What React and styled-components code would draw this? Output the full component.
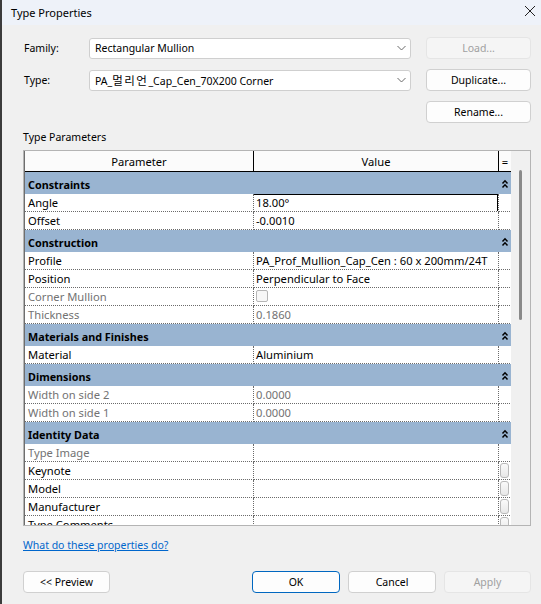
import React from "react";
import styled, { createGlobalStyle } from "styled-components";

const Global = createGlobalStyle`
  html, body { margin: 0; padding: 0; background: #f0f0f0; }
  * { box-sizing: border-box; }
  body { font-family: "Noto Sans", "Noto Sans CJK KR", sans-serif; font-size: 10.5px; color: #000; }
`;

const Window = styled.div`
  width: 541px;
  height: 604px;
  background: #f0f0f0;
  border-left: 2px solid #3c3c3c;
  display: flex;
  flex-direction: column;
  overflow: hidden;
`;

const TitleBar = styled.div`
  height: 25px;
  background: #eef2f9;
  display: flex;
  align-items: center;
  justify-content: space-between;
  padding: 0 4px 0 9px;
  font-size: 11px;
`;

const Close = styled.div`
  width: 14px;
  height: 14px;
  display: flex;
  align-items: center;
  justify-content: center;
  margin-top: -4px;
`;

const Body = styled.div`
  flex: 1;
  display: flex;
  flex-direction: column;
  padding: 12px 10px 0 21px;
`;

const TopGrid = styled.div`
  display: grid;
  grid-template-columns: 66px 322px 105px;
  grid-template-rows: 22px 22px 22px;
  row-gap: 10px;
  align-items: center;
  & > :nth-child(3n) { margin-left: 15px; width: 105px; }
`;

const Label = styled.div`
  padding-left: 1px;
`;

const Combo = styled.div`
  height: 21px;
  background: #fff;
  border: 1px solid #cfcfcf;
  border-radius: 3px;
  display: flex;
  align-items: center;
  justify-content: space-between;
  padding: 0 4px 0 5px;
`;

const Hangul = styled.span`
  font-family: "Noto Sans CJK KR", sans-serif;
  font-size: 11.5px;
  letter-spacing: 1.5px;
`;

const Btn = styled.button`
  height: 22px;
  width: ${(p) => p.$w || 88}px;
  font-family: inherit;
  font-size: 10.5px;
  padding: 0;
  border-radius: 4px;
  background: ${(p) => (p.disabled ? "#f5f5f5" : "#fdfdfd")};
  color: ${(p) => (p.disabled ? "#a0a0a0" : "#000")};
  border: 1px solid ${(p) => (p.$default ? "#0067c0" : p.disabled ? "#e5e5e5" : "#d0d0d0")};
`;

const SectionLabel = styled.div`
  margin-top: 6px;
  line-height: 16px;
`;

const Panel = styled.div`
  margin-top: 5px;
  height: 376px;
  width: 508px;
  border: 1px solid #b4b4b4;
  display: flex;
  background: #f0f0f0;
`;

const Grid = styled.div`
  width: 487px;
  height: 100%;
  overflow: hidden;
  border-left: 1px solid #6e6e6e;
  display: grid;
  grid-template-columns: 229px 245px 13px;
  grid-auto-rows: auto;
  align-content: start;
  font-size: 11.2px;
`;

const HeadCell = styled.div`
  height: 21px;
  background: #fbfbfb;
  border-right: 1px solid #000;
  border-bottom: 1px solid #000;
  display: flex;
  align-items: center;
  justify-content: center;
`;

const GroupRow = styled.div`
  grid-column: 1 / -1;
  height: 22px;
  background: #99b4d1;
  display: flex;
  align-items: center;
  justify-content: space-between;
  padding: 2px 3px 0 3px;
  font-weight: bold;
  font-size: 10.8px;
`;

const Cell = styled.div`
  height: 18px;
  border-right: 1px dotted #6a6a6a;
  border-bottom: 1px dotted #6a6a6a;
  background: #fff;
  display: flex;
  align-items: center;
  padding: 0 0 1px ${(p) => (p.$pad ?? 3)}px;
  color: ${(p) => (p.$disabled ? "#727272" : "#000")};
  white-space: nowrap;
  overflow: hidden;
  position: relative;
`;

const EditBox = styled.div`
  position: absolute;
  inset: 0 0 -1px -1px;
  border: 1.5px solid #000;
  display: flex;
  align-items: center;
  padding-left: 2px;
  padding-bottom: 1px;
  background: #fff;
`;

const Check = styled.div`
  width: 12px;
  height: 12px;
  border: 1px solid #b6b6b6;
  border-radius: 2px;
  background: #f7f7f7;
`;

const MiniBtn = styled.div`
  width: 9px;
  height: 15px;
  margin-left: 1px;
  border: 1px solid #b9b9b9;
  border-radius: 3px;
  background: linear-gradient(#fafafa, #e8e8e8);
`;

const ScrollArea = styled.div`
  flex: 1;
  display: flex;
  justify-content: center;
  padding: 19px 1px 0 0;
`;

const Thumb = styled.div`
  width: 3px;
  height: 150px;
  border-radius: 2px;
  background: #8a8a8a;
`;

const Link = styled.a`
  margin-top: 11px;
  line-height: 16px;
  color: #0066cc;
  text-decoration: underline;
  align-self: flex-start;
`;

const Footer = styled.div`
  margin-top: 18px;
  display: flex;
  gap: 8px;
  align-items: center;
  & > :first-child { margin-right: auto; }
`;

const Chevron = () => (
  <svg width="9" height="6" viewBox="0 0 9 6">
    <path d="M0.5 1 L4.5 5 L8.5 1" fill="none" stroke="#6a6a6a" strokeWidth="1" />
  </svg>
);

const Collapse = () => (
  <svg width="8" height="10" viewBox="0 0 8 10">
    <path d="M1.5 4.5 L4 1.8 L6.5 4.5 M1.5 8.5 L4 5.8 L6.5 8.5" fill="none" stroke="#000" strokeWidth="1.5" />
  </svg>
);

const groups = [
  {
    name: "Constraints",
    items: [
      { p: "Angle", v: "18.00°", edit: true },
      { p: "Offset", v: "-0.0010" },
    ],
  },
  {
    name: "Construction",
    items: [
      { p: "Profile", v: "PA_Prof_Mullion_Cap_Cen : 60 x 200mm/24T" },
      { p: "Position", v: "Perpendicular to Face" },
      { p: "Corner Mullion", check: true, dis: true },
      { p: "Thickness", v: "0.1860", dis: true },
    ],
  },
  { name: "Materials and Finishes", items: [{ p: "Material", v: "Aluminium" }] },
  {
    name: "Dimensions",
    items: [
      { p: "Width on side 2", v: "0.0000", dis: true },
      { p: "Width on side 1", v: "0.0000", dis: true },
    ],
  },
  {
    name: "Identity Data",
    items: [
      { p: "Type Image", dis: true },
      { p: "Keynote", btn: true },
      { p: "Model", btn: true },
      { p: "Manufacturer", btn: true },
      { p: "Type Comments", btn: true },
    ],
  },
];

export default function App() {
  return (
    <>
      <Global />
      <Window>
        <TitleBar>
          <span>Type Properties</span>
          <Close>
            <svg width="12" height="12" viewBox="0 0 12 12">
              <path d="M1 1 L11 11 M11 1 L1 11" stroke="#222" strokeWidth="1" />
            </svg>
          </Close>
        </TitleBar>
        <Body>
          <TopGrid>
            <Label>Family:</Label>
            <Combo>
              <span>Rectangular Mullion</span>
              <Chevron />
            </Combo>
            <Btn $w={105} disabled>Load...</Btn>
            <Label>Type:</Label>
            <Combo>
              <span>
                PA_<Hangul>멀리언</Hangul>_Cap_Cen_70X200 Corner
              </span>
              <Chevron />
            </Combo>
            <Btn $w={105}>Duplicate...</Btn>
            <span />
            <span />
            <Btn $w={105}>Rename...</Btn>
          </TopGrid>
          <SectionLabel>Type Parameters</SectionLabel>
          <Panel>
            <Grid>
              <HeadCell>Parameter</HeadCell>
              <HeadCell>Value</HeadCell>
              <HeadCell>=</HeadCell>
              {groups.map((g) => (
                <React.Fragment key={g.name}>
                  <GroupRow>
                    <span>{g.name}</span>
                    <Collapse />
                  </GroupRow>
                  {g.items.map((it) => (
                    <React.Fragment key={it.p}>
                      <Cell $disabled={it.dis}>{it.p}</Cell>
                      <Cell $disabled={it.dis} $pad={2}>
                        {it.edit ? <EditBox>{it.v}</EditBox> : it.check ? <Check /> : it.v}
                      </Cell>
                      <Cell $pad={0}>{it.btn && <MiniBtn />}</Cell>
                    </React.Fragment>
                  ))}
                </React.Fragment>
              ))}
            </Grid>
            <ScrollArea>
              <Thumb />
            </ScrollArea>
          </Panel>
          <Link href="#">What do these properties do?</Link>
          <Footer>
            <Btn $w={87}>&lt;&lt; Preview</Btn>
            <Btn $w={88} $default>OK</Btn>
            <Btn $w={88}>Cancel</Btn>
            <Btn $w={87} disabled>Apply</Btn>
          </Footer>
        </Body>
      </Window>
    </>
  );
}
